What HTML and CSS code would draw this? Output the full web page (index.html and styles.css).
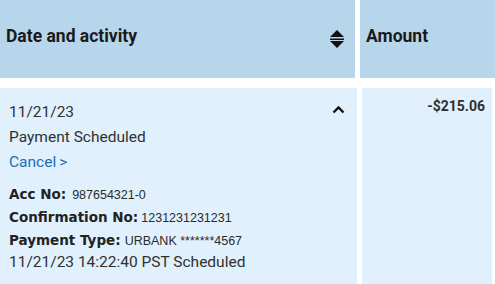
FILE: index.html
```html
<!DOCTYPE html>
<html lang="en">
<head>
    <meta charset="UTF-8">
    <meta name="viewport" content="width=device-width, initial-scale=1.0">
    <title>Activity</title>
    <link rel="stylesheet" href="styles.css">
</head>
<body>
    <div class="table-head">
        <div class="head-cell head-date">
            <span>Date and activity</span>
            <svg class="sort-icon" width="14" height="19" viewBox="0 0 14 19">
                <path d="M7 0 L14 7 L0 7 Z" fill="#111"/>
                <rect x="0" y="8.5" width="14" height="1.5" fill="#111"/>
                <path d="M0 11 L14 11 L7 18 Z" fill="#111"/>
            </svg>
        </div>
        <div class="head-cell">Amount</div>
    </div>

    <div class="table-row">
        <div class="row-cell row-detail">
            <svg class="chevron" width="13" height="9" viewBox="0 0 13 9">
                <path d="M1.5 7.5 L6.5 2.5 L11.5 7.5" fill="none" stroke="#111" stroke-width="2.4"/>
            </svg>
            <div class="line">11/21/23</div>
            <div class="line">Payment Scheduled</div>
            <a class="line cancel" href="#">Cancel<span class="caret">&gt;</span></a>
            <div class="info first"><b>Acc No:</b><span class="val val-acc">987654321-0</span></div>
            <div class="info"><b>Confirmation No:</b><span class="val val-conf">1231231231231</span></div>
            <div class="info"><b>Payment Type:</b><span class="val val-type">URBANK *******4567</span></div>
            <div class="line last">11/21/23 14:22:40 PST Scheduled</div>
        </div>
        <div class="row-cell row-amount">-$215.06</div>
    </div>
</body>
</html>
```

FILE: styles.css
```css
body {
    margin: 0;
    font-family: Roboto, "Noto Sans", sans-serif;
    color: #2b2b2b;
    background-color: #ffffff;
    overflow: hidden;
}

.table-head {
    display: grid;
    grid-template-columns: 355px 140px;
    column-gap: 5px;
    height: 78px;
}

.head-cell {
    background-color: #b7d5eb;
    display: flex;
    align-items: center;
    padding: 0 6px 6px;
    font-size: 17.5px;
    font-weight: bold;
    color: #1a1a1a;
}

.head-date {
    justify-content: space-between;
    padding-right: 11px;
}

.sort-icon {
    display: block;
    margin-top: 6px;
}

.table-row {
    display: grid;
    grid-template-columns: 357px 130px;
    column-gap: 5px;
    margin-top: 10px;
    height: 200px;
}

.row-cell {
    background-color: #e0f0fd;
}

.row-detail {
    position: relative;
    padding: 12px 9px 0;
}

.chevron {
    position: absolute;
    top: 17px;
    right: 12px;
}

.line {
    display: block;
    font-size: 15.5px;
    line-height: 25px;
    color: #303030;
}

.line.last {
    margin-top: -2px;
}

.cancel {
    color: #1d6db4;
    text-decoration: none;
}

.caret {
    margin-left: 3px;
}

.info {
    font-size: 13.5px;
    line-height: 22px;
}

.info b {
    font-family: "DejaVu Sans", sans-serif;
    color: #222;
}

.info.first {
    margin-top: 8px;
}

.val {
    font-family: "Liberation Sans", Arial, sans-serif;
    font-size: 12.5px;
}

.val-acc {
    margin-left: 6px;
}

.val-conf {
    margin-left: 3px;
}

.val-type {
    margin-left: 4px;
}

.row-amount {
    text-align: right;
    padding: 10px 7px 0 0;
    font-size: 14px;
    font-weight: bold;
    color: #2f2f2f;
}
```
